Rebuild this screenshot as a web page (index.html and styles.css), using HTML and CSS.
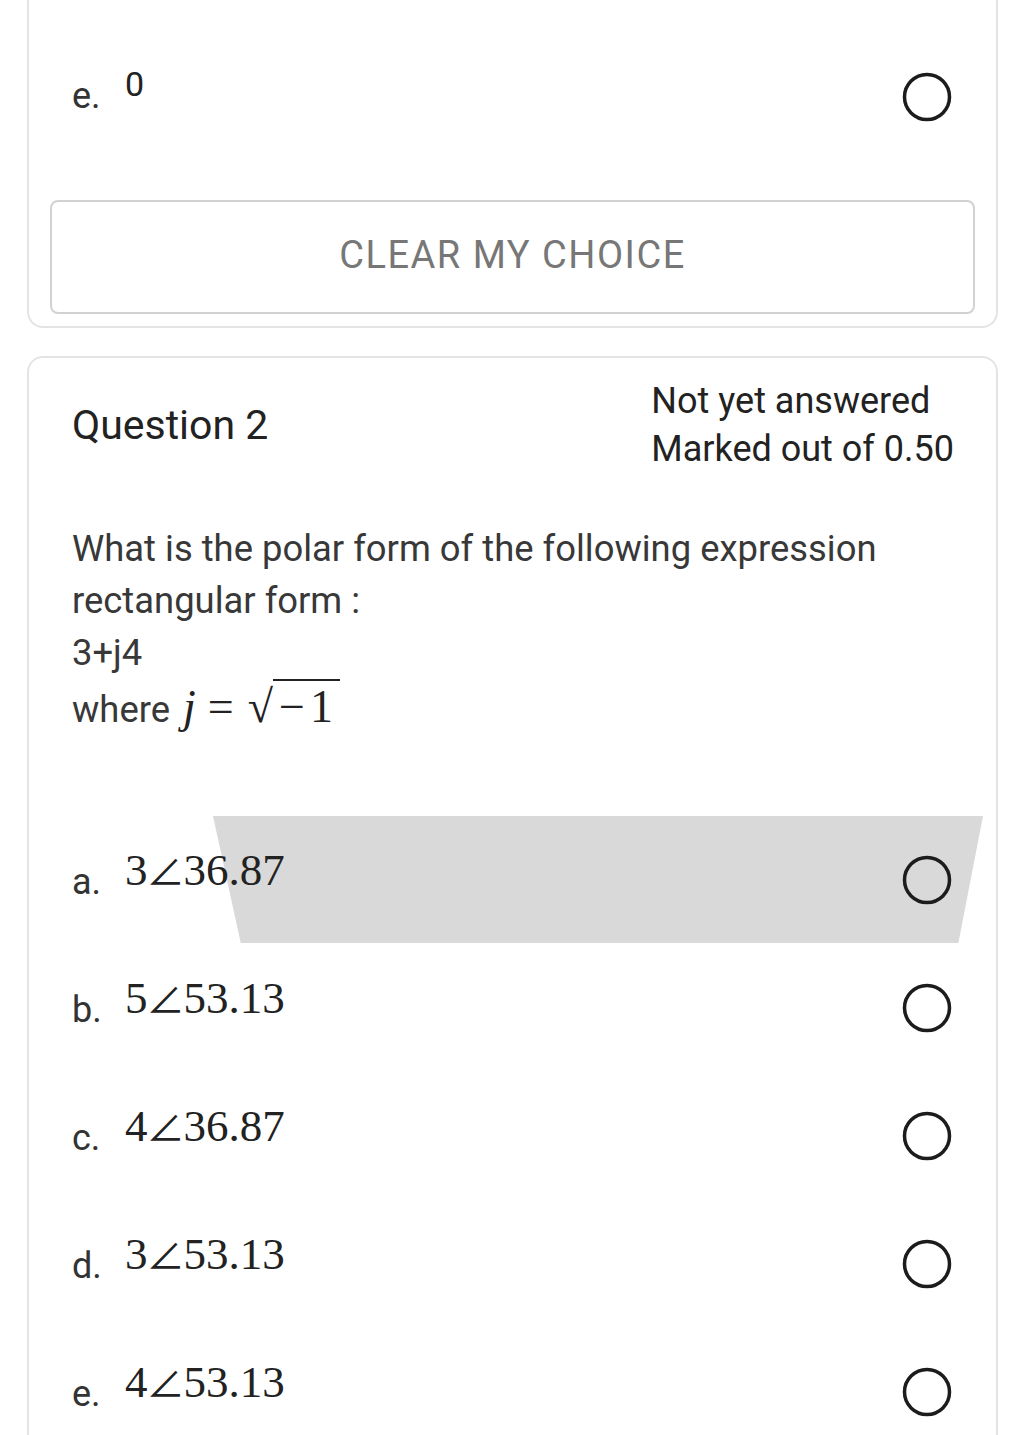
FILE: index.html
```html
<!DOCTYPE html>
<html lang="en">
<head>
<meta charset="utf-8">
<title>Quiz</title>
<link rel="stylesheet" href="styles.css">
</head>
<body>
<div class="page">
  <section class="card card-first">
    <div class="option">
      <div class="choice"><span class="label">e.</span><span class="answer plain">0</span></div>
      <svg class="radio" viewBox="0 0 50 50"><circle cx="25" cy="25" r="22.5"/></svg>
    </div>
    <button class="clear">CLEAR MY CHOICE</button>
  </section>

  <section class="card card-second">
    <header class="qhead">
      <h2 class="qno">Question 2</h2>
      <div class="qinfo">
        <div>Not yet answered</div>
        <div>Marked out of 0.50</div>
      </div>
    </header>
    <div class="qtext">
      <p>What is the polar form of the following expression rectangular form :</p>
      <p>3+j4</p>
      <p>where <span class="math"><i>j</i><span class="eq">=</span><span class="sqrt"><span class="rad">√</span><span class="under">−1</span></span></span></p>
    </div>
    <div class="options">
      <div class="option hl">
        <div class="shade"></div>
        <div class="choice"><span class="label">a.</span><span class="answer">3<span class="ang">∠</span>36.87</span></div>
        <svg class="radio" viewBox="0 0 50 50"><circle cx="25" cy="25" r="22.5"/></svg>
      </div>
      <div class="option">
        <div class="choice"><span class="label">b.</span><span class="answer">5<span class="ang">∠</span>53.13</span></div>
        <svg class="radio" viewBox="0 0 50 50"><circle cx="25" cy="25" r="22.5"/></svg>
      </div>
      <div class="option">
        <div class="choice"><span class="label">c.</span><span class="answer">4<span class="ang">∠</span>36.87</span></div>
        <svg class="radio" viewBox="0 0 50 50"><circle cx="25" cy="25" r="22.5"/></svg>
      </div>
      <div class="option">
        <div class="choice"><span class="label">d.</span><span class="answer">3<span class="ang">∠</span>53.13</span></div>
        <svg class="radio" viewBox="0 0 50 50"><circle cx="25" cy="25" r="22.5"/></svg>
      </div>
      <div class="option">
        <div class="choice"><span class="label">e.</span><span class="answer">4<span class="ang">∠</span>53.13</span></div>
        <svg class="radio" viewBox="0 0 50 50"><circle cx="25" cy="25" r="22.5"/></svg>
      </div>
    </div>
  </section>
</div>
</body>
</html>
```

FILE: styles.css
```css
* { box-sizing: border-box; }
html, body { margin: 0; padding: 0; background: #fff; }
body {
  font-family: Roboto, "Liberation Sans", sans-serif;
  color: #333;
  width: 1024px;
  height: 1435px;
  overflow: hidden;
}
.page {
  padding: 0 26px 0 27px;
  display: flex;
  flex-direction: column;
  gap: 28px;
}
.card {
  border: 2px solid #e4e4e4;
  border-radius: 16px;
  background: #fff;
}
.card-first {
  border-top: 0;
  border-top-left-radius: 0;
  border-top-right-radius: 0;
  padding: 33px 21px 12px 21px;
}
.card-second {
  padding: 19px 0 0 0;
}
.option {
  position: relative;
  height: 128px;
  display: flex;
  align-items: center;
  justify-content: space-between;
  padding: 0 44px 0 43px;
}
.card-first .option {
  padding: 0 23px 0 22px;
}
.choice {
  position: relative;
  z-index: 1;
  white-space: nowrap;
  padding-top: 0;
  margin-top: -14px;
}
.label {
  display: inline-block;
  font-size: 36px;
  color: #333;
  width: 53px;
}
.answer {
  display: inline-flex;
  align-items: baseline;
  vertical-align: 9px;
  font-family: "Liberation Serif", "DejaVu Serif", serif;
  font-size: 45px;
  line-height: 52px;
  color: #222;
}
.answer.plain {
  display: inline-block;
  font-family: Roboto, sans-serif;
  font-size: 34px;
  line-height: normal;
  vertical-align: 12px;
}
.ang {
  font-family: "Noto Sans CJK JP", "Noto Sans CJK SC", "DejaVu Serif", sans-serif;
  font-weight: 400;
  font-size: 38px;
  line-height: 1;
  margin: 0 -1px 0 -1px;
}
.radio {
  position: relative;
  z-index: 1;
  width: 50px;
  height: 50px;
  fill: none;
  stroke: #1c1c1c;
  stroke-width: 3.5;
}
.clear {
  display: block;
  width: 100%;
  margin-top: 39px;
  height: 114px;
  padding-bottom: 6px;
  border: 2px solid #d2d2d2;
  border-radius: 8px;
  background: #fff;
  font-family: Roboto, sans-serif;
  font-size: 38px;
  letter-spacing: 1.5px;
  color: #777;
}
.qhead {
  display: flex;
  justify-content: space-between;
  align-items: center;
  padding: 0 42px 0 43px;
}
.qno {
  margin: 0;
  font-weight: 400;
  font-size: 41px;
  color: #222;
}
.qinfo {
  font-size: 36px;
  line-height: 48px;
  color: #222;
}
.qtext {
  margin-top: 50px;
  padding: 0 43px;
  font-size: 36.4px;
  line-height: 52px;
  color: #383838;
}
.qtext p {
  margin: 0;
  max-width: 830px;
}
.math {
  font-family: "Liberation Serif", "DejaVu Serif", serif;
  font-size: 46px;
  color: #222;
}
.math i { margin-left: 4px; }
.eq { margin: 0 14px 0 12px; }
.sqrt { display: inline-flex; align-items: flex-end; }
.rad { font-size: 46px; line-height: 1; }
.under {
  border-top: 2px solid #222;
  line-height: 1;
  letter-spacing: 5px;
  padding: 3px 2px 0 6px;
}
.options {
  margin-top: 80px;
}
.shade {
  position: absolute;
  z-index: 0;
  left: 184px;
  top: 0;
  width: 770px;
  height: 127px;
  background: #d9d9d9;
  clip-path: polygon(0 0, 100% 0, 96.8% 100%, 3.6% 100%);
}
```
